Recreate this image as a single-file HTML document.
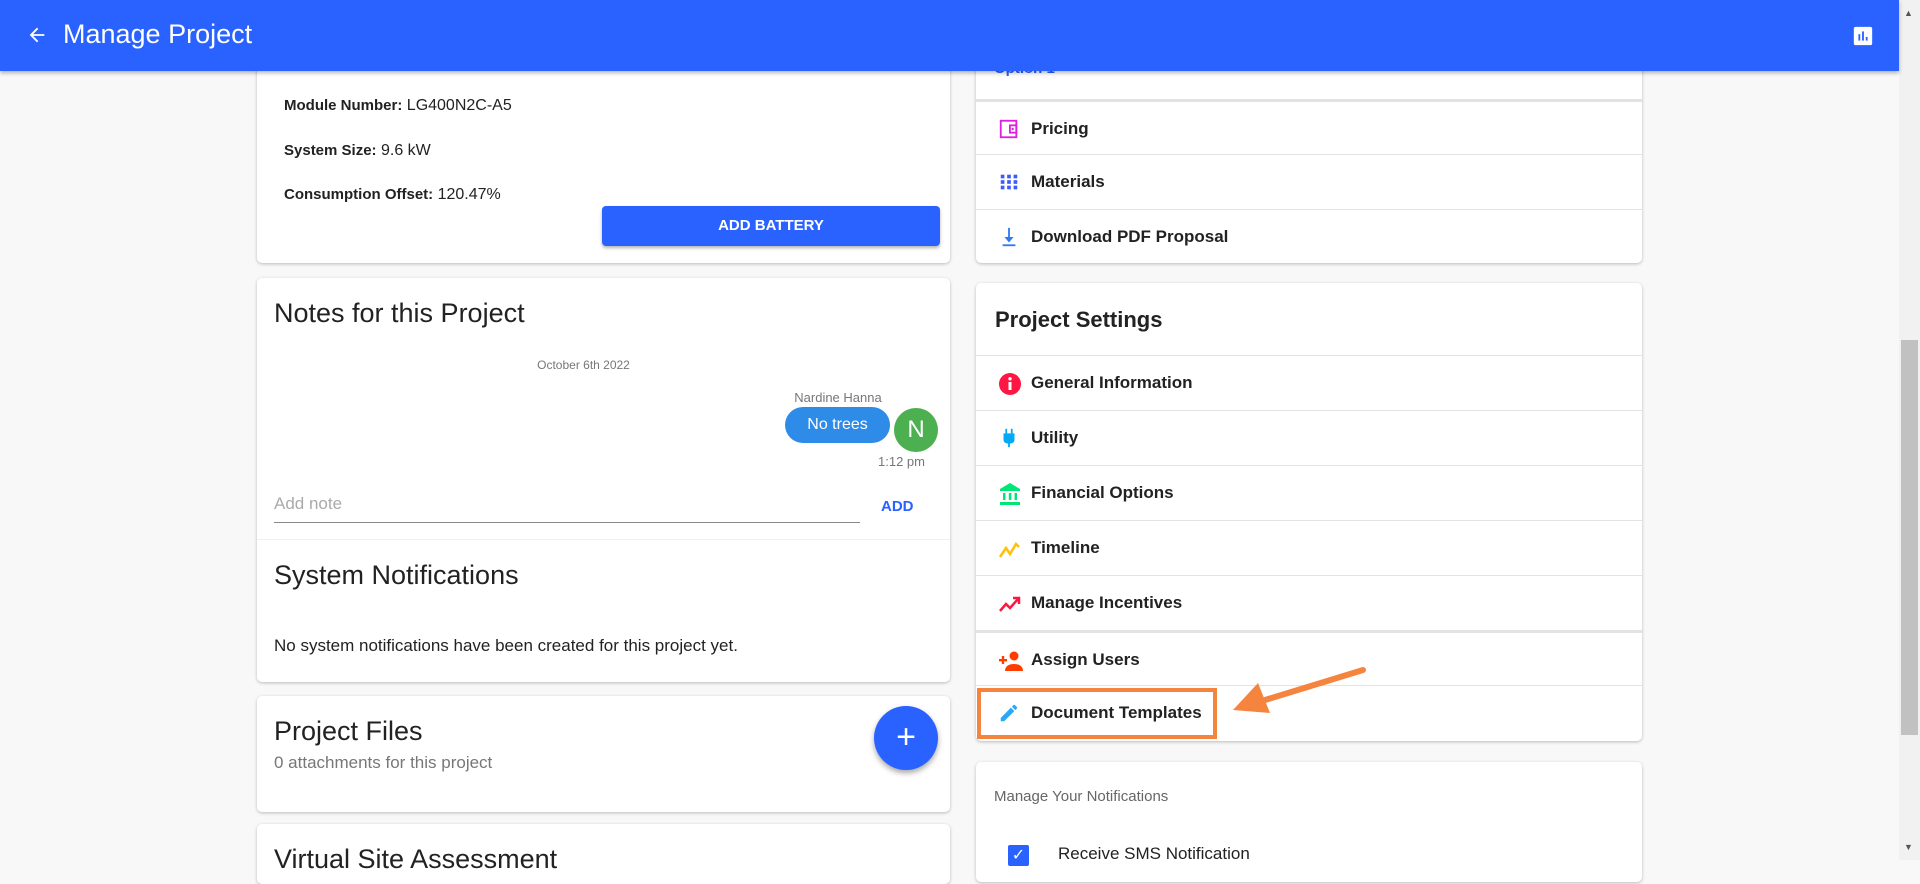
<!DOCTYPE html>
<html><head><meta charset="utf-8"><style>
*{box-sizing:border-box;margin:0;padding:0}
body{width:1920px;height:860px;overflow:hidden;background:#f8f8f8;font-family:"Liberation Sans",Arial,sans-serif;position:relative;color:#222}
.abs{position:absolute}
.card{position:absolute;background:#fff;border-radius:5px;box-shadow:0 1px 3px rgba(0,0,0,.25)}
.hdr{position:absolute;left:0;top:0;width:1899px;height:71px;background:#2962ff;box-shadow:0 2px 4px rgba(0,0,0,.3);z-index:5}
.lbl{position:absolute;left:27px;font-size:16px;color:#222}
.lbl b{font-weight:bold;font-size:15px}
.row{position:absolute;left:0;width:666px;height:55px;border-top:1px solid #e3e3e3;font-weight:bold;font-size:17px;color:#222}
.row span{position:absolute;left:55px;top:17px}
.row svg{position:absolute;left:22px;top:16px}
</style></head><body>
<div class="hdr">
  <svg class="abs" style="left:26px;top:24px" width="22" height="22" viewBox="0 0 24 24"><path d="M20 11H7.8l5.6-5.6L12 4l-8 8 8 8 1.4-1.4L7.8 13H20z" fill="#fff"/></svg>
  <div class="abs" style="left:63px;top:19px;color:#fff;font-size:27px">Manage Project</div>
  <svg class="abs" style="left:1852px;top:25px" width="22" height="22" viewBox="0 0 24 24"><rect x="2" y="2" width="20" height="20" rx="2" fill="#fff"/><rect x="7" y="10" width="2" height="7" fill="#2962ff"/><rect x="11" y="7" width="2" height="10" fill="#2962ff"/><rect x="15" y="13" width="2" height="4" fill="#2962ff"/></svg>
</div>
<!-- scrollbar -->
<div class="abs" style="left:1899px;top:0;width:21px;height:860px;background:#f1f1f1"></div>
<div class="abs" style="left:1901px;top:340px;width:17px;height:395px;background:#c1c1c1"></div>
<div class="abs" style="left:1904px;top:8px;font-size:9px;color:#555">▲</div>
<div class="abs" style="left:1904px;top:842px;font-size:9px;color:#555">▼</div>

<!-- left card 1 -->
<div class="card" style="left:257px;top:40px;width:693px;height:223px">
  <div class="lbl" style="top:57px"><b>Module Number:</b> LG400N2C-A5</div>
  <div class="lbl" style="top:102px"><b>System Size:</b> 9.6 kW</div>
  <div class="lbl" style="top:146px"><b>Consumption Offset:</b> 120.47%</div>
  <div class="abs" style="left:345px;top:166px;width:338px;height:40px;background:#2962ff;border-radius:4px;box-shadow:0 2px 3px rgba(0,0,0,.3);color:#fff;font-weight:bold;font-size:15px;text-align:center;line-height:40px">ADD BATTERY</div>
</div>
<!-- notes card -->
<div class="card" style="left:257px;top:278px;width:693px;height:404px">
  <div class="abs" style="left:17px;top:20px;font-size:27px;color:#222">Notes for this Project</div>
  <div class="abs" style="left:0;width:693px;text-align:center;top:80px;font-size:12px;color:#777;padding-right:40px">October 6th 2022</div>
  <div class="abs" style="left:535px;top:112px;font-size:13px;color:#777;width:92px;text-align:center">Nardine Hanna</div>
  <div class="abs" style="left:528px;top:129px;width:105px;height:36px;border-radius:18px;background:#2e8be8;color:#fff;font-size:16px;text-align:center;line-height:36px">No trees</div>
  <div class="abs" style="left:637px;top:130px;width:44px;height:44px;border-radius:50%;background:#4caf50;color:#fff;font-size:24px;text-align:center;line-height:44px">N</div>
  <div class="abs" style="left:621px;top:176px;font-size:13px;color:#777">1:12 pm</div>
  <div class="abs" style="left:17px;top:216px;font-size:17px;color:#aaa">Add note</div>
  <div class="abs" style="left:17px;top:244px;width:586px;height:1px;background:#888"></div>
  <div class="abs" style="left:624px;top:220px;font-size:15px;color:#2962ff;font-weight:bold">ADD</div>
  <div class="abs" style="left:0;top:261px;width:693px;height:1px;background:#f0f0f0"></div>
  <div class="abs" style="left:17px;top:282px;font-size:27px;color:#222">System Notifications</div>
  <div class="abs" style="left:17px;top:358px;font-size:17px;color:#222">No system notifications have been created for this project yet.</div>
</div>
<!-- project files -->
<div class="card" style="left:257px;top:696px;width:693px;height:116px">
  <div class="abs" style="left:17px;top:20px;font-size:27px;color:#222">Project Files</div>
  <div class="abs" style="left:17px;top:57px;font-size:17px;color:#777">0 attachments for this project</div>
  <div class="abs" style="left:617px;top:10px;width:64px;height:64px;border-radius:50%;background:#2962ff;box-shadow:0 3px 6px rgba(0,0,0,.35);color:#fff;font-size:34px;text-align:center;line-height:62px">+</div>
</div>
<div class="card" style="left:257px;top:824px;width:693px;height:60px">
  <div class="abs" style="left:17px;top:20px;font-size:27px;color:#222">Virtual Site Assessment</div>
</div>

<!-- right card 1 -->
<div class="card" style="left:976px;top:20px;width:666px;height:243px">
  <div class="abs" style="left:18px;top:40px;font-size:15px;color:#2962ff;font-weight:bold">Option 1</div>
  <div class="row" style="top:79px;border-top:3px solid #e3e3e3"><svg width="22" height="22" viewBox="0 0 24 24"><rect x="3" y="3" width="17" height="18" fill="none" stroke="#e020e0" stroke-width="2"/><rect x="13" y="8" width="7" height="8" fill="none" stroke="#e020e0" stroke-width="2"/><circle cx="16" cy="12" r="1.3" fill="#e020e0"/></svg><span>Pricing</span></div>
  <div class="row" style="top:134px"><svg width="22" height="22" viewBox="0 0 24 24" fill="#3d5afe"><rect x="3" y="4" width="4" height="4"/><rect x="10" y="4" width="4" height="4"/><rect x="17" y="4" width="4" height="4"/><rect x="3" y="10" width="4" height="4"/><rect x="10" y="10" width="4" height="4"/><rect x="17" y="10" width="4" height="4"/><rect x="3" y="16" width="4" height="4"/><rect x="10" y="16" width="4" height="4"/><rect x="17" y="16" width="4" height="4"/></svg><span>Materials</span></div>
  <div class="row" style="top:189px"><svg width="22" height="22" viewBox="0 0 24 24" fill="#2e7bf0"><path d="M11 2h2v10h4l-5 6-5-6h4z"/><rect x="5" y="20" width="14" height="2"/></svg><span>Download PDF Proposal</span></div>
</div>

<!-- project settings -->
<div class="card" style="left:976px;top:283px;width:666px;height:458px">
  <div class="abs" style="left:19px;top:24px;font-size:22px;font-weight:bold;color:#222">Project Settings</div>
  <div class="row" style="top:72px"><svg width="24" height="24" viewBox="0 0 24 24"><circle cx="12" cy="12" r="11" fill="#ff1744"/><rect x="10.5" y="10" width="3" height="8" fill="#fff"/><circle cx="12" cy="6.8" r="1.7" fill="#fff"/></svg><span>General Information</span></div>
  <div class="row" style="top:127px"><svg width="22" height="22" viewBox="0 0 24 24" fill="#03a9f4"><rect x="8" y="2" width="2" height="5"/><rect x="14" y="2" width="2" height="5"/><path d="M6 7h12v7a4 4 0 0 1-4 4h-1v4h-2v-4h-1a4 4 0 0 1-4-4z"/></svg><span>Utility</span></div>
  <div class="row" style="top:182px"><svg width="24" height="24" viewBox="0 0 24 24" fill="#00e676"><path d="M12 1l10 6H2z"/><rect x="2" y="7" width="20" height="2"/><rect x="5" y="11" width="2.5" height="7"/><rect x="10.8" y="11" width="2.5" height="7"/><rect x="16.5" y="11" width="2.5" height="7"/><rect x="2" y="20" width="20" height="3"/></svg><span>Financial Options</span></div>
  <div class="row" style="top:237px"><svg width="24" height="24" viewBox="0 0 24 24"><path d="M2 20l6-9 4 6 6-10 3 3" fill="none" stroke="#ffc107" stroke-width="2.5"/></svg><span>Timeline</span></div>
  <div class="row" style="top:292px"><svg width="24" height="24" viewBox="0 0 24 24"><path d="M2 19l6-7 4 4 8-9" fill="none" stroke="#ff1744" stroke-width="2.5"/><path d="M15 6h6v6" fill="none" stroke="#ff1744" stroke-width="2.5"/></svg><span>Manage Incentives</span></div>
  <div class="row" style="top:347px;border-top:3px solid #e3e3e3"><svg width="26" height="24" viewBox="0 0 26 24" fill="#ff3d00"><circle cx="16" cy="7" r="4.5"/><path d="M7 22c0-5 4-7 9-7s9 2 9 7z"/><rect x="1" y="10" width="8" height="2.4"/><rect x="3.8" y="7" width="2.4" height="8"/></svg><span>Assign Users</span></div>
  <div class="row" style="top:402px"><svg width="22" height="22" viewBox="0 0 24 24" fill="#29a8f5"><path d="M3 17.3V21h3.7L17.8 9.9l-3.7-3.7zM20.7 7c.4-.4.4-1 0-1.4l-2.3-2.3c-.4-.4-1-.4-1.4 0l-1.8 1.8 3.7 3.7z"/></svg><span>Document Templates</span></div>
</div>
<!-- highlight -->
<div class="abs" style="left:977px;top:688px;width:240px;height:51px;border:4px solid #f5843e"></div>
<svg class="abs" style="left:1225px;top:660px" width="150" height="60" viewBox="0 0 150 60"><line x1="138" y1="10" x2="40" y2="40" stroke="#f5843e" stroke-width="6" stroke-linecap="round"/><path d="M8 50l25-27 12 30z" fill="#f5843e"/></svg>

<!-- notifications -->
<div class="card" style="left:976px;top:762px;width:666px;height:120px">
  <div class="abs" style="left:18px;top:26px;font-size:15px;color:#666">Manage Your Notifications</div>
  <div class="abs" style="left:32px;top:83px;width:21px;height:21px;background:#2962ff;border-radius:2px;color:#fff;font-size:16px;text-align:center;line-height:21px">✓</div>
  <div class="abs" style="left:82px;top:82px;font-size:17px;color:#222">Receive SMS Notification</div>
</div>
</body></html>
